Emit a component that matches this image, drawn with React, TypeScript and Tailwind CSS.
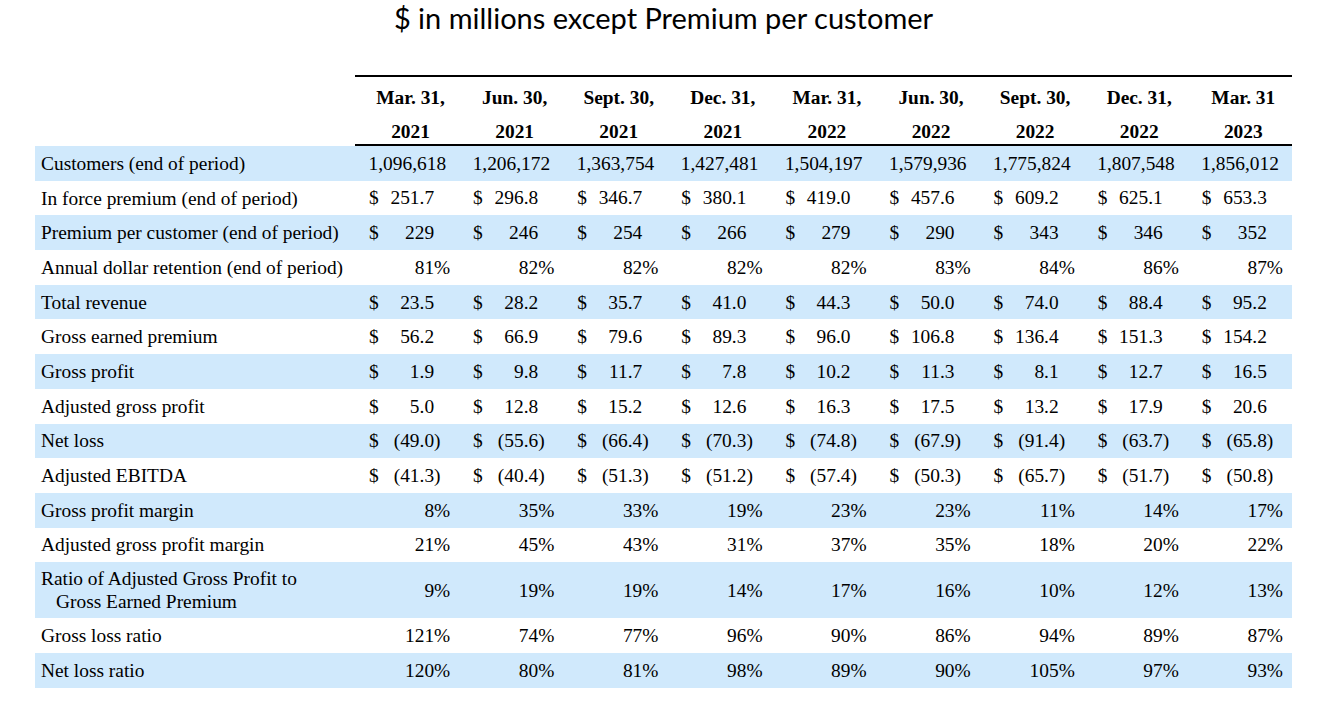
import React from "react";

type Kind = "plain" | "dollar" | "pct";
type Row = { label: string[]; kind: Kind; values: string[] };

const cols: string[][] = [
  ["Mar. 31,", "2021"],
  ["Jun. 30,", "2021"],
  ["Sept. 30,", "2021"],
  ["Dec. 31,", "2021"],
  ["Mar. 31,", "2022"],
  ["Jun. 30,", "2022"],
  ["Sept. 30,", "2022"],
  ["Dec. 31,", "2022"],
  ["Mar. 31", "2023"],
];

const rows: Row[] = [
  { label: ["Customers (end of period)"], kind: "plain", values: ["1,096,618", "1,206,172", "1,363,754", "1,427,481", "1,504,197", "1,579,936", "1,775,824", "1,807,548", "1,856,012"] },
  { label: ["In force premium (end of period)"], kind: "dollar", values: ["251.7", "296.8", "346.7", "380.1", "419.0", "457.6", "609.2", "625.1", "653.3"] },
  { label: ["Premium per customer (end of period)"], kind: "dollar", values: ["229", "246", "254", "266", "279", "290", "343", "346", "352"] },
  { label: ["Annual dollar retention (end of period)"], kind: "pct", values: ["81", "82", "82", "82", "82", "83", "84", "86", "87"] },
  { label: ["Total revenue"], kind: "dollar", values: ["23.5", "28.2", "35.7", "41.0", "44.3", "50.0", "74.0", "88.4", "95.2"] },
  { label: ["Gross earned premium"], kind: "dollar", values: ["56.2", "66.9", "79.6", "89.3", "96.0", "106.8", "136.4", "151.3", "154.2"] },
  { label: ["Gross profit"], kind: "dollar", values: ["1.9", "9.8", "11.7", "7.8", "10.2", "11.3", "8.1", "12.7", "16.5"] },
  { label: ["Adjusted gross profit"], kind: "dollar", values: ["5.0", "12.8", "15.2", "12.6", "16.3", "17.5", "13.2", "17.9", "20.6"] },
  { label: ["Net loss"], kind: "dollar", values: ["(49.0)", "(55.6)", "(66.4)", "(70.3)", "(74.8)", "(67.9)", "(91.4)", "(63.7)", "(65.8)"] },
  { label: ["Adjusted EBITDA"], kind: "dollar", values: ["(41.3)", "(40.4)", "(51.3)", "(51.2)", "(57.4)", "(50.3)", "(65.7)", "(51.7)", "(50.8)"] },
  { label: ["Gross profit margin"], kind: "pct", values: ["8", "35", "33", "19", "23", "23", "11", "14", "17"] },
  { label: ["Adjusted gross profit margin"], kind: "pct", values: ["21", "45", "43", "31", "37", "35", "18", "20", "22"] },
  { label: ["Ratio of Adjusted Gross Profit to", "Gross Earned Premium"], kind: "pct", values: ["9", "19", "19", "14", "17", "16", "10", "12", "13"] },
  { label: ["Gross loss ratio"], kind: "pct", values: ["121", "74", "77", "96", "90", "86", "94", "89", "87"] },
  { label: ["Net loss ratio"], kind: "pct", values: ["120", "80", "81", "98", "89", "90", "105", "97", "93"] },
];

function Value({ kind, v }: { kind: Kind; v: string }) {
  if (kind === "plain") {
    return <div className="flex h-full items-center justify-end pr-[13px]">{v}</div>;
  }
  if (kind === "pct") {
    return (
      <div className="flex h-full items-center justify-end pr-[25px]">
        <span>
          {v}
          <span className="inline-block w-0">%</span>
        </span>
      </div>
    );
  }
  const neg = v.startsWith("(");
  const body = neg ? v.slice(0, -1) : v;
  return (
    <div className="flex h-full items-center justify-between pl-[14px] pr-[25px]">
      <span>$</span>
      <span>
        {body}
        {neg ? <span className="inline-block w-0">)</span> : null}
      </span>
    </div>
  );
}

export default function App() {
  return (
    <div className="w-[1340px] h-[710px] bg-white text-black pl-[35px] overflow-hidden">
      <div
        className="h-[75px] w-[1257px] text-center text-[29px] leading-[35px] text-black"
        style={{ fontFamily: "Lato, 'Open Sans', sans-serif" }}
      >
        $ in millions except Premium per customer
      </div>
      <div
        className="grid grid-cols-[320px_repeat(9,104.1px)] text-[19.4px] text-black"
        style={{ fontFamily: "'Liberation Serif', 'Times New Roman', serif" }}
      >
        <div />
        {cols.map((c, i) => (
          <div
            key={i}
            className="h-[71px] border-t-2 border-b-2 border-black pl-[7px] pt-[4px] text-center font-bold leading-[34.4px]"
          >
            <div>{c[0]}</div>
            <div>{c[1]}</div>
          </div>
        ))}
        {rows.map((r, ri) => {
          const band = ri % 2 === 0 ? "bg-[#d0e9fc]" : "bg-white";
          const h = r.label.length > 1 ? "h-[56px]" : "h-[34.7px]";
          return (
            <React.Fragment key={ri}>
              <div className={`${band} ${h} flex flex-col justify-center pl-[6px] leading-[23px] whitespace-nowrap`}>
                {r.label.map((l, li) => (
                  <div key={li} className={li > 0 ? "pl-[15px]" : ""}>
                    {l}
                  </div>
                ))}
              </div>
              {r.values.map((v, vi) => (
                <div key={vi} className={`${band} ${h} whitespace-nowrap`}>
                  <Value kind={r.kind} v={v} />
                </div>
              ))}
            </React.Fragment>
          );
        })}
      </div>
    </div>
  );
}
